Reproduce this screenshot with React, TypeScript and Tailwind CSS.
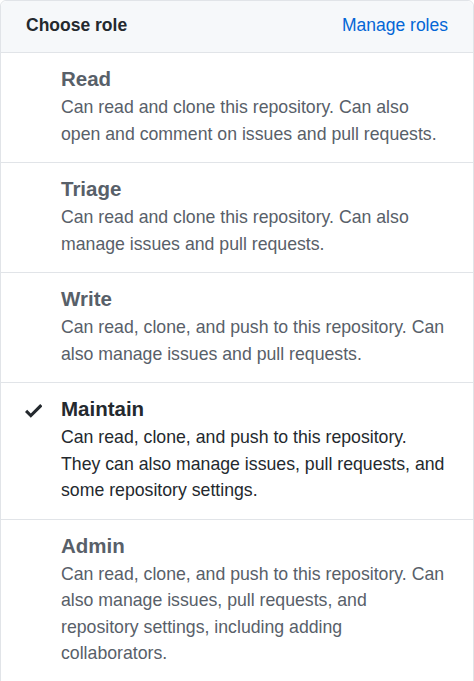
const roles = [
  {
    title: "Read",
    desc: "Can read and clone this repository. Can also open and comment on issues and pull requests.",
  },
  {
    title: "Triage",
    desc: "Can read and clone this repository. Can also manage issues and pull requests.",
  },
  {
    title: "Write",
    desc: "Can read, clone, and push to this repository. Can also manage issues and pull requests.",
  },
  {
    title: "Maintain",
    desc: "Can read, clone, and push to this repository. They can also manage issues, pull requests, and some repository settings.",
    selected: true,
  },
  {
    title: "Admin",
    desc: "Can read, clone, and push to this repository. Can also manage issues, pull requests, and repository settings, including adding collaborators.",
  },
];

const Check = () => (
  <svg width="17.4" height="23.2" viewBox="0 0 12 16" className="fill-[#24292e]">
    <path d="M12 5l-8 8-4-4 1.5-1.5L4 10l6.5-6.5L12 5z" />
  </svg>
);

export default function App() {
  return (
    <div className="w-[474px] h-[681px] overflow-hidden bg-white font-['Liberation_Sans',Arial,sans-serif]">
      <div className="border border-[#e1e4e8] rounded-t-[6px] h-[700px]">
        <div className="flex items-center justify-between h-[52px] pb-[2px] px-[25px] bg-[#f6f8fa] border-b border-[#e1e4e8] rounded-t-[6px]">
          <span className="text-[17.5px] font-bold text-[#24292e]">Choose role</span>
          <a className="text-[17.5px] text-[#0366d6]">Manage roles</a>
        </div>
        {roles.map((item, index) => (
          <div
            key={index}
            className="relative flex pl-[60px] pr-[26px] pt-[10px] pb-[15px] border-b border-[#e1e4e8] last:border-b-0"
          >
            {item.selected && (
              <div className="absolute left-[24px] top-[16px]">
                <Check />
              </div>
            )}
            <div className={item.selected ? "text-[#24292e]" : "text-[#586069]"}>
              <h3 className="text-[20.5px] leading-[31px] font-bold">{item.title}</h3>
              <p className="text-[17.7px] leading-[26.5px]">{item.desc}</p>
            </div>
          </div>
        ))}
      </div>
    </div>
  );
}
